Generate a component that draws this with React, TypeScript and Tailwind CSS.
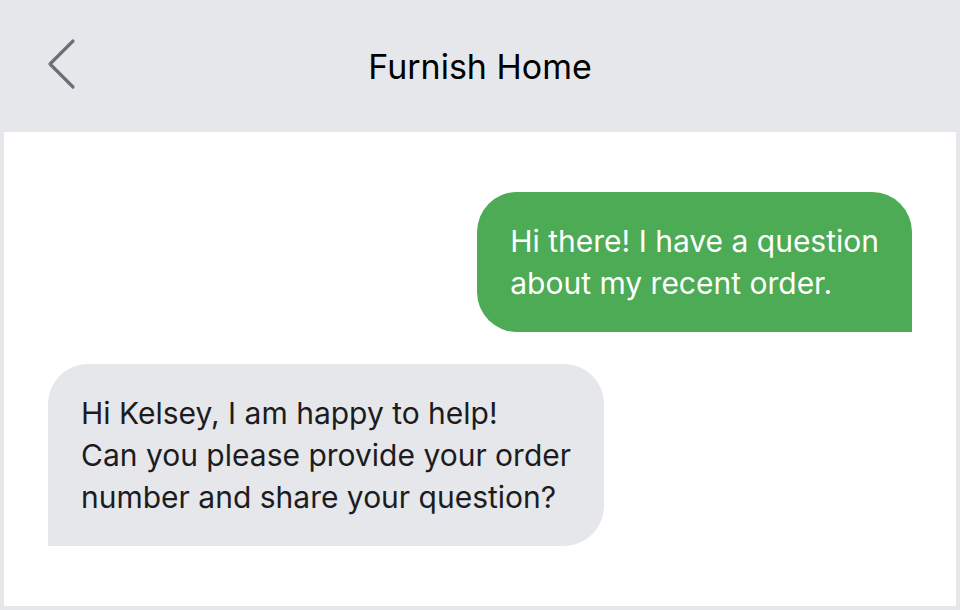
export default function App() {
  return (
    <div
      className="flex h-[610px] w-[960px] flex-col bg-[#e5e7eb] px-1 pb-1"
      style={{ fontFamily: "Inter, 'Noto Sans', sans-serif" }}
    >
      <header className="relative flex h-[132px] shrink-0 items-center justify-center">
        <button className="absolute left-[41px] top-[38px] p-0" aria-label="Back">
          <svg width="36" height="52" viewBox="0 0 36 52" fill="none">
            <path
              d="M28 3 L5 26 L28 49"
              stroke="#6b6f76"
              strokeWidth="3.2"
              strokeLinecap="round"
              strokeLinejoin="round"
            />
          </svg>
        </button>
        <h1 className="text-[34px] font-normal text-black">Furnish Home</h1>
      </header>

      <main className="flex flex-1 flex-col gap-[32px] bg-white px-[44px] pt-[60px]">
        <div className="flex justify-end">
          <div className="rounded-[40px] rounded-br-none bg-[#4cab54] px-[33px] py-[28px] text-[30px] leading-[42px] text-white">
            Hi there! I have a question
            <br />
            about my recent order.
          </div>
        </div>
        <div className="flex justify-start">
          <div className="rounded-[40px] rounded-bl-none bg-[#e5e7eb] px-[33px] py-[28px] text-[30px] leading-[42px] text-[#1c1c1e]">
            Hi Kelsey, I am happy to help!
            <br />
            Can you please provide your order
            <br />
            number and share your question?
          </div>
        </div>
      </main>
    </div>
  );
}
